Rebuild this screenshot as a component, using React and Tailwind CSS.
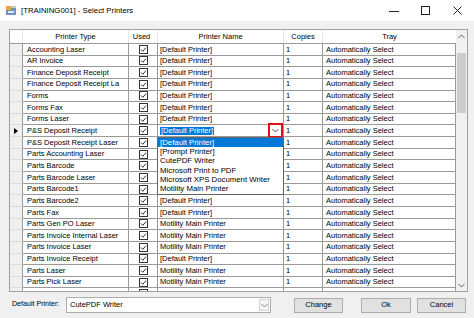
const rows = [
  ['Accounting Laser', '[Default Printer]'],
  ['AR Invoice', '[Default Printer]'],
  ['Finance Deposit Receipt', '[Default Printer]'],
  ['Finance Deposit Receipt La', '[Default Printer]'],
  ['Forms', '[Default Printer]'],
  ['Forms Fax', '[Default Printer]'],
  ['Forms Laser', '[Default Printer]'],
  ['P&S Deposit Receipt', '[Default Printer]'],
  ['P&S Deposit Receipt Laser', ''],
  ['Parts Accounting Laser', ''],
  ['Parts Barcode', ''],
  ['Parts Barcode Laser', ''],
  ['Parts Barcode1', ''],
  ['Parts Barcode2', '[Default Printer]'],
  ['Parts Fax', '[Default Printer]'],
  ['Parts Gen PO Laser', 'Motility Main Printer'],
  ['Parts Invoice Internal Laser', 'Motility Main Printer'],
  ['Parts Invoice Laser', 'Motility Main Printer'],
  ['Parts Invoice Receipt', '[Default Printer]'],
  ['Parts Laser', 'Motility Main Printer'],
  ['Parts Pick Laser', 'Motility Main Printer'],
  ['Parts PO Laser', 'Motility Main Printer'],
]

const printers = [
  '[Default Printer]',
  '[Prompt Printer]',
  'CutePDF Writer',
  'Microsoft Print to PDF',
  'Microsoft XPS Document Writer',
  'Motility Main Printer',
]

const EDIT_ROW = 7

function Check() {
  return (
    <svg width="9" height="9" viewBox="0 0 9 9">
      <rect x="0.5" y="0.5" width="8" height="8" fill="#fff" stroke="#333" />
      <path d="M2 4.5 L3.8 6.3 L7 2.6" fill="none" stroke="#333" strokeWidth="1" />
    </svg>
  )
}

function Chevron({ up = false, color = '#555' }) {
  return (
    <svg width="7" height="5" viewBox="0 0 7 5">
      <path d={up ? 'M0.5 4 L3.5 1 L6.5 4' : 'M0.5 1 L3.5 4 L6.5 1'} fill="none" stroke={color} strokeWidth="1" />
    </svg>
  )
}

function Row({ i, type, printer }) {
  const editing = i === EDIT_ROW
  return (
    <div className="flex h-[11.65px] shrink-0">
      <div className="flex w-[13px] shrink-0 items-center justify-center border-r border-b border-r-[#9a9a9a] border-b-[#dcdcdc] bg-[#f0f0f0]">
        {editing && (
          <svg width="4" height="6" viewBox="0 0 4 6">
            <path d="M0 0 L4 3 L0 6 Z" fill="#000" />
          </svg>
        )}
      </div>
      <div className="flex w-[106px] shrink-0 items-center overflow-hidden whitespace-nowrap border-r border-b border-[#9a9a9a] bg-white pl-[4px]">
        {type}
      </div>
      <div className="flex w-[29px] shrink-0 items-center justify-center border-r border-b border-[#9a9a9a] bg-white">
        <Check />
      </div>
      <div className="relative flex w-[126px] shrink-0 items-center whitespace-nowrap border-r border-b border-[#9a9a9a] bg-white pl-[2px]">
        {editing ? (
          <>
            <span className="bg-[#0078d7] px-[1px] text-white">{printer}</span>
            <div className="absolute right-[0px] top-[-2px] flex h-[15px] w-[15px] items-center justify-center border-2 border-[#e0101a] bg-white">
              <Chevron />
            </div>
          </>
        ) : (
          printer
        )}
      </div>
      <div className="flex w-[39px] shrink-0 items-center border-r border-b border-[#9a9a9a] bg-white pl-[2px]">1</div>
      <div className="flex w-[133px] shrink-0 items-center whitespace-nowrap border-r border-b border-[#9a9a9a] bg-white pl-[3px]">
        Automatically Select
      </div>
    </div>
  )
}

export default function App() {
  return (
    <div className="flex h-[318px] w-[474px] flex-col overflow-hidden bg-[#f0f0f0] font-['Liberation_Sans',Arial,sans-serif] text-[7.5px] leading-none text-black">
      {/* title bar */}
      <div className="flex h-[21px] shrink-0 items-center bg-white">
        <svg className="ml-[6px]" width="10" height="9" viewBox="0 0 10 9">
          <rect x="0" y="2" width="10" height="7" fill="#6f93c4" />
          <rect x="0" y="0" width="5" height="4" fill="#f2a431" />
          <rect x="5" y="0" width="5" height="2" fill="#c9c9c9" />
          <rect x="2" y="5" width="6" height="2" fill="#dfe8f3" />
        </svg>
        <span className="ml-[5px] text-[7.8px]">[TRAINING001] - Select Printers</span>
        <div className="ml-auto flex items-center">
          <svg className="mr-[22px]" width="10" height="10" viewBox="0 0 10 10">
            <path d="M0 5.5 H10" stroke="#222" strokeWidth="1" />
          </svg>
          <svg className="mr-[23px]" width="9" height="9" viewBox="0 0 9 9">
            <rect x="0.5" y="0.5" width="8" height="8" fill="none" stroke="#222" strokeWidth="1" />
          </svg>
          <svg className="mr-[12px]" width="9" height="9" viewBox="0 0 9 9">
            <path d="M0.5 0.5 L8.5 8.5 M8.5 0.5 L0.5 8.5" stroke="#222" strokeWidth="1" />
          </svg>
        </div>
      </div>

      {/* grid */}
      <div className="ml-[9px] mt-[8px] flex h-[263px] w-[459px] shrink-0 border border-[#a0a0a0] bg-white">
        <div className="relative flex w-[446px] flex-col overflow-hidden">
          <div className="flex h-[14px] shrink-0 border-b border-[#9a9a9a] bg-white">
            <div className="w-[13px] shrink-0 border-r border-[#e5e5e5]" />
            <div className="flex w-[106px] shrink-0 items-center justify-center border-r border-[#e5e5e5]">Printer Type</div>
            <div className="flex w-[29px] shrink-0 items-center justify-center border-r border-[#e5e5e5] pr-[3px]">Used</div>
            <div className="flex w-[126px] shrink-0 items-center justify-center border-r border-[#e5e5e5]">Printer Name</div>
            <div className="flex w-[39px] shrink-0 items-center justify-center border-r border-[#e5e5e5]">Copies</div>
            <div className="flex w-[133px] shrink-0 items-center justify-center">Tray</div>
          </div>
          {rows.map(([type, printer], i) => (
            <Row key={type} i={i} type={type} printer={printer} />
          ))}

          {/* open dropdown list */}
          <div className="absolute left-[147px] top-[107px] flex h-[58px] w-[127px] flex-col border border-[#646464] bg-white text-[7.8px]">
            {printers.map((p, i) => (
              <div
                key={p}
                className={
                  i === 0
                    ? 'flex h-[9.4px] items-center whitespace-nowrap bg-[#0078d7] pl-[2px] text-white'
                    : 'flex h-[9.4px] items-center whitespace-nowrap pl-[2px]'
                }
              >
                {p}
              </div>
            ))}
          </div>
        </div>

        {/* scrollbar */}
        <div className="flex w-[11px] flex-col bg-[#f0f0f0]">
          <div className="flex h-[12px] items-center justify-center">
            <Chevron up color="#606060" />
          </div>
          <div className="h-[11px]" />
          <div className="mx-[1px] h-[60px] bg-[#cdcdcd]" />
          <div className="flex-1" />
          <div className="flex h-[12px] items-center justify-center">
            <Chevron color="#606060" />
          </div>
        </div>
      </div>

      {/* bottom bar */}
      <div className="mt-[5px] flex h-[16px] items-center pl-[12px]">
        <span className="w-[54px] shrink-0 whitespace-nowrap text-[7.1px]">Default Printer:</span>
        <div className="flex h-[16px] w-[205px] shrink-0 items-center border border-[#adadad] bg-white pl-[3px]">
          <span>CutePDF Writer</span>
          <div className="ml-auto mr-[1px] flex h-[12px] w-[10px] items-center justify-center border border-[#d0d0d0] bg-[#f4f4f4]">
            <Chevron color="#888" />
          </div>
        </div>
        <button className="ml-[23px] flex h-[15px] w-[49px] shrink-0 items-center justify-center border border-[#adadad] bg-[#e1e1e1]">
          Change
        </button>
        <button className="ml-[18px] flex h-[15px] w-[50px] shrink-0 items-center justify-center border border-[#adadad] bg-[#e1e1e1]">
          Ok
        </button>
        <button className="ml-[6px] flex h-[15px] w-[49px] shrink-0 items-center justify-center border border-[#adadad] bg-[#e1e1e1]">
          Cancel
        </button>
      </div>
    </div>
  )
}
